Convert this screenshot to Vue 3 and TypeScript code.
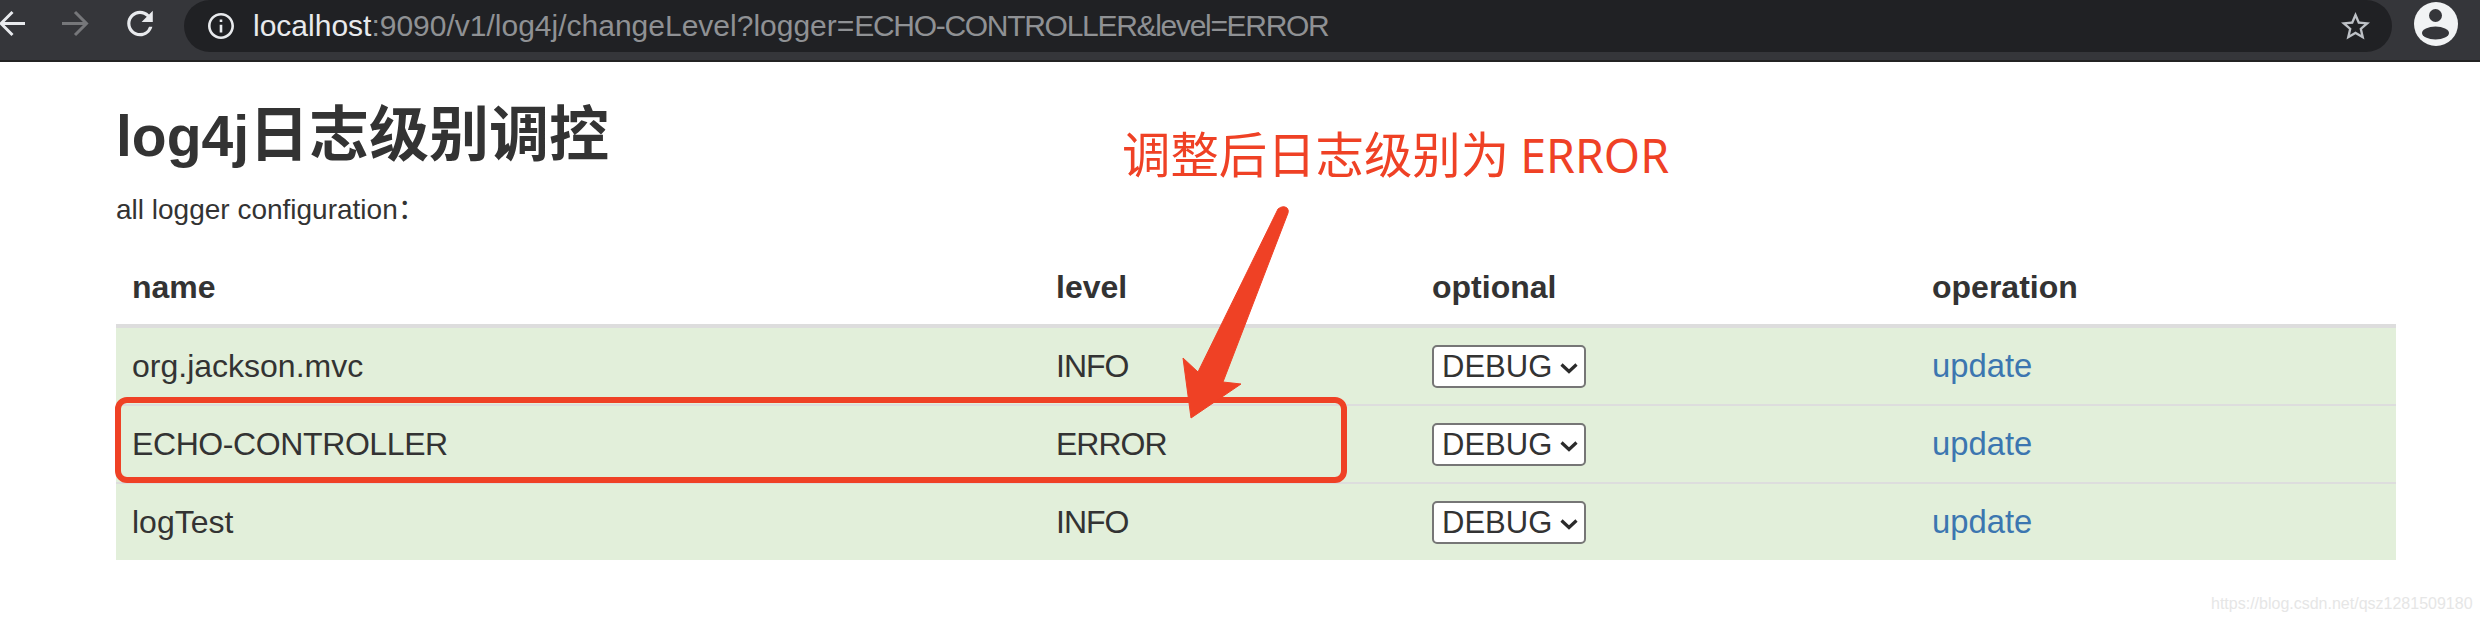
<script setup lang="ts">
interface Row { name: string; level: string }
const rows: Row[] = [
  { name: 'org.jackson.mvc', level: 'INFO' },
  { name: 'ECHO-CONTROLLER', level: 'ERROR' },
  { name: 'logTest', level: 'INFO' }
]
const levels = ['DEBUG', 'INFO', 'WARN', 'ERROR']
const isCaps = (s: string): boolean => s === s.toUpperCase()
</script>

<template>
  <div class="page">
    <header class="toolbar">
      <svg class="nav" width="184" height="60" viewBox="0 0 184 60">
        <path d="M25 23.5H2M12.5 12L1 23.5 12.5 35" fill="none" stroke="#e8eaed" stroke-width="3" />
        <path d="M62 23.5H86M75 12l11.500 11.500L75 35" fill="none" stroke="#76777a" stroke-width="3" />
        <path transform="translate(120.800 4.300) scale(1.6)" fill="#e8eaed"
          d="M17.65 6.35A7.958 7.958 0 0 0 12 4c-4.420 0-7.990 3.580-7.990 8s3.570 8 7.990 8c3.730 0 6.840-2.550 7.730-6h-2.080A5.990 5.990 0 0 1 12 18c-3.310 0-6-2.690-6-6s2.690-6 6-6c1.660 0 3.140.690 4.220 1.780L13 11h7V4l-2.350 2.350z" />
      </svg>
      <div class="omnibox">
        <svg class="info" width="26" height="26" viewBox="2 2 20 20">
          <path fill="#e8eaed"
            d="M11 7h2v2h-2zm0 4h2v6h-2zm1-9C6.480 2 2 6.480 2 12s4.480 10 10 10 10-4.480 10-10S17.520 2 12 2zm0 18c-4.410 0-8-3.590-8-8s3.590-8 8-8 8 3.590 8 8-3.590 8-8 8z" />
        </svg>
        <span class="url"><span class="host">localhost</span>:9090/v1/log4j/changeLevel?logger=<span class="url-caps">ECHO-CONTROLLER&amp;level=ERROR</span></span>
        <svg class="star" width="29" height="29" viewBox="2 2 20 20">
          <path fill="#bdc1c6"
            d="M22 9.240l-7.190-.620L12 2 9.190 8.630 2 9.240l5.460 4.730L5.820 21 12 17.270 18.180 21l-1.630-7.030L22 9.240zM12 15.400l-3.760 2.270 1-4.280-3.320-2.880 4.380-.380L12 6.100l1.710 4.040 4.380.380-3.320 2.880 1 4.280L12 15.400z" />
        </svg>
      </div>
      <svg class="avatar" width="44" height="44" viewBox="0 0 44 44">
        <circle cx="22" cy="22" r="22" fill="#f1f3f4" />
        <circle cx="21.500" cy="13.500" r="6.500" fill="#35363a" />
        <ellipse cx="21.500" cy="31" rx="13.500" ry="6.500" fill="#35363a" />
      </svg>
    </header>

    <main class="content">
      <h2 class="title"><span class="title-en">log4j</span>日志级别调控</h2>
      <p class="sub">all logger configuration：</p>
      <table class="grid">
        <colgroup>
          <col class="c1" /><col class="c2" /><col class="c3" /><col class="c4" />
        </colgroup>
        <thead>
          <tr><th>name</th><th>level</th><th>optional</th><th>operation</th></tr>
        </thead>
        <tbody>
          <tr v-for="row in rows" :key="row.name">
            <td :class="{ caps: isCaps(row.name) }">{{ row.name }}</td>
            <td class="lvl">{{ row.level }}</td>
            <td>
              <span class="select-wrap">
                <select class="select">
                  <option v-for="l in levels" :key="l">{{ l }}</option>
                </select>
                <svg class="chev" width="18" height="11" viewBox="0 0 18 11">
                  <path d="M1.500 1.500L9 8.500l7.500-7" fill="none" stroke="#2b2b2b" stroke-width="3.200" />
                </svg>
              </span>
            </td>
            <td><a class="link" href="#">update</a></td>
          </tr>
        </tbody>
      </table>
    </main>

    <div class="note">调整后日志级别为<span class="note-en">ERROR</span></div>
    <div class="box"></div>
    <svg class="arrow" width="120" height="220" viewBox="1180 204 120 220">
      <path fill="#ef4125" stroke="#ef4125" stroke-width="1" stroke-linejoin="round"
        d="M1278 209Q1283 205 1287 208Q1289 210 1288 213L1223 382 1241 384 1191 418 1183 358 1198 372Z" />
    </svg>
    <div class="watermark">https://blog.csdn.net/qsz1281509180</div>
  </div>
</template>

<style>
html, body { margin: 0; background: #fff; }
</style>

<style scoped>
.page {
  position: relative;
  width: 2480px;
  height: 622px;
  overflow: hidden;
  background: #fff;
  font-family: "Liberation Sans", "Noto Sans CJK SC", sans-serif;
  color: #333;
}
.toolbar {
  display: flex;
  align-items: flex-start;
  height: 60px;
  background: #35363a;
  border-bottom: 2px solid #232323;
}
.nav { flex: none; display: block; }
.omnibox {
  flex: none;
  width: 2208px;
  height: 52px;
  display: flex;
  align-items: center;
  background: #202124;
  border-radius: 26px;
  padding: 0 22px 0 24px;
  box-sizing: border-box;
}
.info { flex: none; margin-right: 19px; }
.url {
  flex: 1;
  font-size: 30px;
  line-height: 52px;
  color: #8f9194;
  white-space: nowrap;
}
.host { color: #e8eaed; }
.url-caps { letter-spacing: -1.300px; }
.star { flex: none; }
.avatar { flex: none; margin: 2px 0 0 22px; }

.content { padding: 0 84px 0 116px; }
.title {
  margin: 0;
  padding-top: 38px;
  height: 72px;
  font-size: 60px;
  line-height: 72px;
  font-weight: 700;
  color: #333;
  white-space: nowrap;
}
.title-en { font-size: 57px; }
.sub {
  margin: 0;
  padding-top: 18px;
  height: 40px;
  font-size: 28px;
  line-height: 40px;
  color: #333;
}
.grid {
  display: table;
  width: 2280px;
  margin-top: 28px;
  border-collapse: separate;
  border-spacing: 0;
  table-layout: fixed;
}
.c1 { width: 924px; }
.c2 { width: 376px; }
.c3 { width: 500px; }
.c4 { width: 480px; }
th {
  height: 70px;
  padding: 0 16px 8px;
  font-size: 32px;
  line-height: 40px;
  font-weight: 700;
  text-align: left;
  border-bottom: 4px solid #ddd;
  box-sizing: border-box;
  vertical-align: middle;
}
td {
  height: 76px;
  padding: 0 16px;
  font-size: 32px;
  line-height: 40px;
  background: #e2efda;
  vertical-align: middle;
}
td.caps { letter-spacing: -0.400px; }
td.lvl { letter-spacing: -1px; }
tbody tr + tr td { border-top: 2px solid #ddd; }
.select-wrap {
  position: relative;
  display: inline-block;
  vertical-align: middle;
  width: 154px;
  height: 43px;
}
.select {
  display: block;
  appearance: none;
  width: 154px;
  height: 43px;
  margin: 0;
  padding: 0 0 0 8px;
  border: 2px solid #767676;
  border-radius: 5px;
  background: #fff;
  box-sizing: border-box;
  color: #333;
  font-family: "Liberation Sans", sans-serif;
  font-size: 31px;
  line-height: 39px;
}
.chev { position: absolute; left: 128px; top: 18px; pointer-events: none; }
.link { color: #3c76b0; text-decoration: none; font-size: 32.800px; }

.note {
  position: absolute;
  left: 1122px;
  top: 118px;
  font-family: "Noto Sans CJK SC", "Noto Sans", sans-serif;
  font-size: 48.400px;
  line-height: 68px;
  color: #ef4125;
  white-space: nowrap;
}
.note-en { font-family: "Noto Sans", sans-serif; font-size: 46.500px; margin-left: 11px; }
.box {
  position: absolute;
  left: 115px;
  top: 397px;
  width: 1232px;
  height: 86px;
  box-sizing: border-box;
  border: 6.500px solid #ef4125;
  border-radius: 12px;
}
.arrow { position: absolute; left: 1180px; top: 204px; }
.watermark {
  position: absolute;
  left: 2211px;
  top: 592px;
  font-size: 16px;
  line-height: 24px;
  color: #e6e6e6;
  white-space: nowrap;
}
</style>
